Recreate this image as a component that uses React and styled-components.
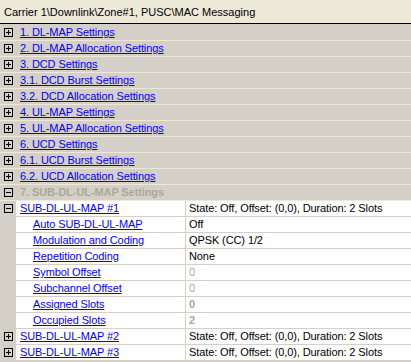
import React from 'react';
import styled, { createGlobalStyle } from 'styled-components';

const GlobalStyle = createGlobalStyle`
  body {
    margin: 0;
    background: #d4d0c8;
    font-family: "Liberation Sans", Arial, sans-serif;
  }
`;

const Panel = styled.div`
  width: 411px;
  height: 362px;
  overflow: hidden;
  background: #d4d0c8;
`;

const Header = styled.div`
  height: 23px;
  display: flex;
  align-items: center;
  padding-left: 4px;
  background: #ece9d8;
  border-bottom: 1px solid #000;
  font-size: 11px;
  color: #000;
`;

const List = styled.div`
  padding-top: 1px;
`;

const Row = styled.div`
  display: flex;
  height: 15px;
  border-bottom: 1px solid ${p => (p.$white ? '#d4d0c8' : '#ece9d8')};
  font-size: 11px;
  letter-spacing: -0.1px;
  line-height: 15px;
`;

const Gutter = styled.div`
  width: 16px;
  flex: none;
  display: flex;
  align-items: center;
  justify-content: center;
  background: #d4d0c8;
`;

const Toggle = styled.span`
  position: relative;
  width: 9px;
  height: 9px;
  box-sizing: border-box;
  border: 1px solid #000;
  margin-left: 1px;

  &::before,
  &::after {
    content: '';
    position: absolute;
    background: #000;
  }
  &::before {
    left: 1px;
    top: 3px;
    width: 5px;
    height: 1px;
  }
  &::after {
    display: ${p => (p.$open ? 'none' : 'block')};
    left: 3px;
    top: 1px;
    width: 1px;
    height: 5px;
  }
`;

const GroupTitle = styled.div`
  padding-left: 4px;
  white-space: nowrap;
`;

const Link = styled.a`
  color: #0000ff;
  text-decoration: underline;
  cursor: pointer;
`;

const Disabled = styled.span`
  color: #aca899;
  font-weight: bold;
`;

const Body = styled.div`
  flex: 1;
  display: flex;
  background: #fff;
`;

const Name = styled.div`
  width: 170px;
  flex: none;
  box-sizing: border-box;
  padding-left: ${p => (p.$child ? 17 : 4)}px;
  border-right: 1px solid #d4d0c8;
  white-space: nowrap;
  overflow: hidden;
`;

const Value = styled.div`
  flex: 1;
  padding-left: 3px;
  white-space: nowrap;
  color: ${p => (p.$muted ? '#aca899' : '#000')};
  font-weight: ${p => (p.$bold ? 'bold' : 'normal')};
`;

const groups = [
  '1. DL-MAP Settings',
  '2. DL-MAP Allocation Settings',
  '3. DCD Settings',
  '3.1. DCD Burst Settings',
  '3.2. DCD Allocation Settings',
  '4. UL-MAP Settings',
  '5. UL-MAP Allocation Settings',
  '6. UCD Settings',
  '6.1. UCD Burst Settings',
  '6.2. UCD Allocation Settings',
];

const summary = 'State: Off, Offset: (0,0), Duration: 2 Slots';

const fields = [
  { name: 'Auto SUB-DL-UL-MAP', value: 'Off' },
  { name: 'Modulation and Coding', value: 'QPSK (CC) 1/2' },
  { name: 'Repetition Coding', value: 'None' },
  { name: 'Symbol Offset', value: '0', muted: true },
  { name: 'Subchannel Offset', value: '0', muted: true },
  { name: 'Assigned Slots', value: '0', muted: true, bold: true },
  { name: 'Occupied Slots', value: '2', muted: true, bold: true },
];

const App = () => (
  <>
    <GlobalStyle />
    <Panel>
      <Header>Carrier 1\Downlink\Zone#1, PUSC\MAC Messaging</Header>
      <List>
        {groups.map(g => (
          <Row key={g}>
            <Gutter><Toggle /></Gutter>
            <GroupTitle><Link>{g}</Link></GroupTitle>
          </Row>
        ))}
        <Row>
          <Gutter><Toggle $open /></Gutter>
          <GroupTitle><Disabled>7. SUB-DL-UL-MAP Settings</Disabled></GroupTitle>
        </Row>
        <Row $white>
          <Gutter><Toggle $open /></Gutter>
          <Body>
            <Name><Link>SUB-DL-UL-MAP #1</Link></Name>
            <Value>{summary}</Value>
          </Body>
        </Row>
        {fields.map(f => (
          <Row $white key={f.name}>
            <Gutter />
            <Body>
              <Name $child><Link>{f.name}</Link></Name>
              <Value $muted={f.muted} $bold={f.bold}>{f.value}</Value>
            </Body>
          </Row>
        ))}
        {['SUB-DL-UL-MAP #2', 'SUB-DL-UL-MAP #3'].map(s => (
          <Row $white key={s}>
            <Gutter><Toggle /></Gutter>
            <Body>
              <Name><Link>{s}</Link></Name>
              <Value>{summary}</Value>
            </Body>
          </Row>
        ))}
      </List>
    </Panel>
  </>
);

export default App;
